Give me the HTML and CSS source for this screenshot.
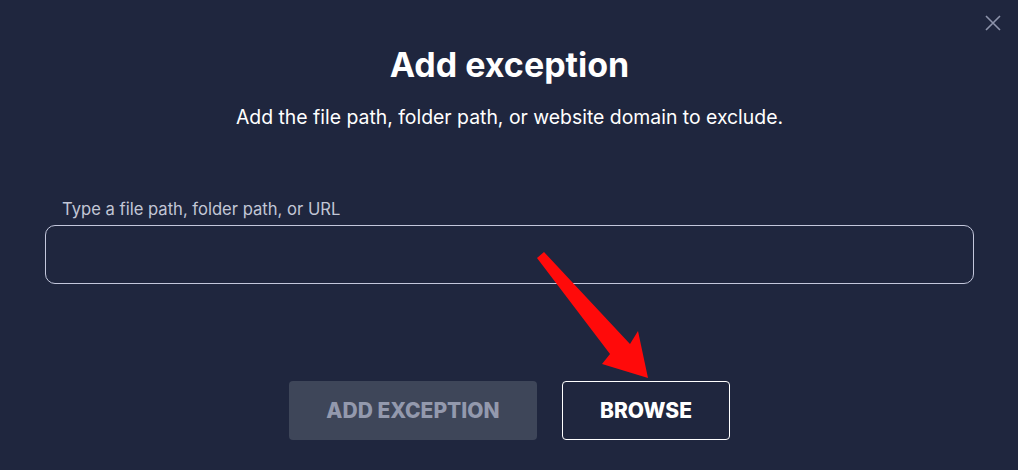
FILE: index.html
```html
<!DOCTYPE html>
<html lang="en">
<head>
    <meta charset="UTF-8">
    <title>Add exception</title>
    <link rel="stylesheet" href="styles.css">
</head>
<body>
    <div class="dialog">
        <button class="close-button" aria-label="Close">
            <svg width="16" height="16" viewBox="0 0 16 16">
                <path d="M1 1 L15 15 M15 1 L1 15" stroke="#8d93ab" stroke-width="1.6" fill="none"/>
            </svg>
        </button>
        <h1>Add exception</h1>
        <p class="subtitle">Add the file path, folder path, or website domain to exclude.</p>

        <label class="field-label" for="path">Type a file path, folder path, or URL</label>
        <input type="text" id="path" class="path-input">

        <div class="actions">
            <button class="btn btn-disabled" disabled>ADD EXCEPTION</button>
            <button class="btn btn-outline">BROWSE</button>
        </div>
    </div>

    <svg class="annotation" width="1018" height="470" viewBox="0 0 1018 470">
        <polygon points="537,258 544,252 630,344 638,331 648,378 602,364 610,354" fill="#ff0a0a"/>
    </svg>
</body>
</html>
```

FILE: styles.css
```css
body {
    margin: 0;
    background-color: #1f263e;
    font-family: Inter, "Liberation Sans", sans-serif;
    color: #fff;
}
.dialog {
    position: relative;
    height: 470px;
    box-sizing: border-box;
    padding: 40px 44px 0 45px;
    display: flex;
    flex-direction: column;
    align-items: center;
}
.close-button {
    position: absolute;
    top: 15px;
    right: 17px;
    padding: 0;
    border: none;
    background: none;
    cursor: pointer;
}
h1 {
    margin: 0;
    font-size: 34px;
    font-weight: 700;
    line-height: 50px;
}
.subtitle {
    margin: 14px 0 0;
    font-size: 19.4px;
    line-height: 26px;
}
.field-label {
    align-self: flex-start;
    margin: 68px 0 0 17px;
    font-size: 16.6px;
    line-height: 22px;
    color: #c2c6d6;
}
.path-input {
    align-self: stretch;
    margin-top: 5px;
    height: 59px;
    box-sizing: border-box;
    background: transparent;
    border: 1px solid #c3c7dc;
    border-radius: 10px;
    color: #fff;
    font: inherit;
    padding: 0 16px;
}
.actions {
    display: flex;
    gap: 25px;
    margin-top: 97px;
}
.btn {
    height: 59px;
    border-radius: 4px;
    font-family: inherit;
    font-size: 21px;
    font-weight: 800;
}
.btn-disabled {
    width: 248px;
    background-color: #3e4659;
    border: none;
    color: #9399ad;
}
.btn-outline {
    width: 168px;
    background: transparent;
    border: 1px solid #fff;
    color: #fff;
    cursor: pointer;
}
.annotation {
    position: absolute;
    top: 0;
    left: 0;
    pointer-events: none;
}
```
